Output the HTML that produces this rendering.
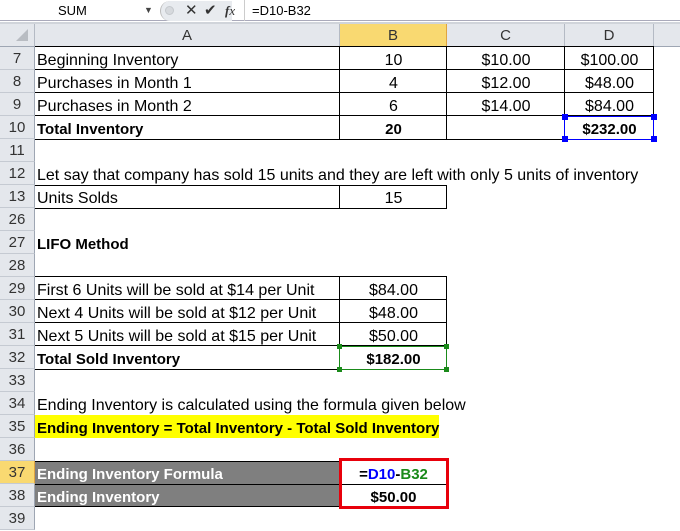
<!DOCTYPE html>
<html><head><meta charset="utf-8"><style>
*{margin:0;padding:0;box-sizing:border-box}
body{width:680px;height:529px;overflow:hidden;background:#fff;font-family:"Liberation Sans",sans-serif;position:relative}
.a{position:absolute}
.t{position:absolute;font-size:16px;line-height:25px;height:23px;white-space:nowrap;color:#000;margin-top:1px}
.c{text-align:center}
.b{font-weight:bold;font-size:15px}
.rh{position:absolute;left:0;width:35px;height:23px;background:#e4e7ec;border-right:1px solid #9ea6b3;border-bottom:1px solid #c5cad2;text-align:center;font-size:15px;line-height:24px;color:#333}
.ch{position:absolute;top:24px;height:23px;background:#e4e7ec;border-right:1px solid #b4bac4;border-bottom:1px solid #9ea6b3;text-align:center;font-size:15px;line-height:23px;color:#333}
.h{position:absolute;width:6px;height:6px}
</style></head><body>
<div class="a" style="left:0;top:0;width:680px;height:21px;background:#fff;border-bottom:1px solid #aab"></div>
<div class="a" style="left:0;top:22px;width:680px;height:2px;background:#d0d4da"></div>
<div class="a" style="left:58px;top:0;font-size:13px;line-height:21px">SUM</div>
<div class="a" style="left:144px;top:0;font-size:9px;line-height:21px;color:#444">▼</div>
<div class="a" style="left:160px;top:1px;width:72px;height:20px;background:#e8ebef;border-radius:10px 0 0 10px;border-left:1px solid #bbb"></div>
<div class="a" style="left:165px;top:6px;width:9px;height:9px;border-radius:50%;background:#d6d9dd;border:1px solid #c4c8cc"></div>
<div class="a" style="left:185px;top:0;font-size:15px;line-height:21px;color:#333">✕</div>
<div class="a" style="left:204px;top:0;font-size:15px;line-height:21px;color:#333">✔</div>
<div class="a" style="left:225px;top:0;font-size:13px;line-height:21px;font-style:italic;font-family:'Liberation Serif',serif;color:#333"><b>f</b>x</div>
<div class="a" style="left:244px;top:0;width:1px;height:21px;background:#ccc"></div>
<div class="a" style="left:252px;top:0;font-size:13px;line-height:21px">=D10-B32</div>
<div class="a" style="left:0;top:24px;width:35px;height:23px;background:#e4e7ec;border-right:1px solid #b4bac4;border-bottom:1px solid #9ea6b3"></div>
<div class="a" style="left:16px;top:29px;width:0;height:0;border-left:12px solid transparent;border-bottom:12px solid #b8bcc2"></div>
<div class="ch" style="left:35px;width:305px">A</div>
<div class="ch" style="left:340px;width:107px;background:#f9d971;border-bottom:1px solid #e0a540;border-right:1px solid #e0a540">B</div>
<div class="ch" style="left:447px;width:118px">C</div>
<div class="ch" style="left:565px;width:89px">D</div>
<div class="ch" style="left:654px;width:30px"></div>
<div class="rh" style="top:47px">7</div><div class="rh" style="top:70px">8</div><div class="rh" style="top:93px">9</div><div class="rh" style="top:116px">10</div><div class="rh" style="top:139px">11</div><div class="rh" style="top:162px">12</div><div class="rh" style="top:185px">13</div><div class="rh" style="top:208px">26</div><div class="rh" style="top:231px">27</div><div class="rh" style="top:254px">28</div><div class="rh" style="top:277px">29</div><div class="rh" style="top:300px">30</div><div class="rh" style="top:323px">31</div><div class="rh" style="top:346px">32</div><div class="rh" style="top:369px">33</div><div class="rh" style="top:392px">34</div><div class="rh" style="top:415px">35</div><div class="rh" style="top:438px">36</div><div class="rh" style="top:461px;background:#f9d971;border-right:1px solid #e0a540">37</div><div class="rh" style="top:484px">38</div><div class="rh" style="top:507px">39</div>
<div class="a" style="left:35px;top:46px;width:619px;height:94px;border:1px solid #000;border-left:none"></div>
<div class="a" style="left:35px;top:69px;width:619px;height:1px;background:#000"></div>
<div class="a" style="left:35px;top:92px;width:619px;height:1px;background:#000"></div>
<div class="a" style="left:35px;top:115px;width:619px;height:1px;background:#000"></div>
<div class="a" style="left:339px;top:46px;width:1px;height:94px;background:#000"></div>
<div class="a" style="left:446px;top:46px;width:1px;height:94px;background:#000"></div>
<div class="a" style="left:564px;top:46px;width:1px;height:94px;background:#000"></div>
<div class="t" style="left:37px;top:47px">Beginning Inventory</div>
<div class="t" style="left:37px;top:70px">Purchases in Month 1</div>
<div class="t" style="left:37px;top:93px">Purchases in Month 2</div>
<div class="t b" style="left:37px;top:116px">Total Inventory</div>
<div class="t c" style="left:340px;width:107px;top:47px">10</div>
<div class="t c" style="left:340px;width:107px;top:70px">4</div>
<div class="t c" style="left:340px;width:107px;top:93px">6</div>
<div class="t c b" style="left:340px;width:107px;top:116px">20</div>
<div class="t c" style="left:447px;width:118px;top:47px">$10.00</div>
<div class="t c" style="left:447px;width:118px;top:70px">$12.00</div>
<div class="t c" style="left:447px;width:118px;top:93px">$14.00</div>
<div class="t c" style="left:565px;width:89px;top:47px">$100.00</div>
<div class="t c" style="left:565px;width:89px;top:70px">$48.00</div>
<div class="t c" style="left:565px;width:89px;top:93px">$84.00</div>
<div class="t c b" style="left:565px;width:89px;top:116px">$232.00</div>
<div class="a" style="left:564px;top:116px;width:90px;height:24px;border:1px solid #0000ff"></div>
<div class="h" style="left:562px;top:114px;background:#00f"></div><div class="h" style="left:651px;top:114px;background:#00f"></div><div class="h" style="left:562px;top:136px;background:#00f"></div><div class="h" style="left:651px;top:136px;background:#00f"></div>
<div class="t" style="left:37px;top:162px">Let say that company has sold 15 units and they are left with only 5 units of inventory</div>
<div class="a" style="left:35px;top:185px;width:412px;height:24px;border:1px solid #000;border-left:none"></div>
<div class="a" style="left:339px;top:185px;width:1px;height:24px;background:#000"></div>
<div class="t" style="left:37px;top:185px">Units Solds</div>
<div class="t c" style="left:340px;width:107px;top:185px">15</div>
<div class="t b" style="left:37px;top:231px">LIFO Method</div>
<div class="a" style="left:35px;top:276px;width:412px;height:94px;border:1px solid #000;border-left:none"></div>
<div class="a" style="left:35px;top:299px;width:412px;height:1px;background:#000"></div>
<div class="a" style="left:35px;top:322px;width:412px;height:1px;background:#000"></div>
<div class="a" style="left:35px;top:345px;width:412px;height:1px;background:#000"></div>
<div class="a" style="left:339px;top:276px;width:1px;height:94px;background:#000"></div>
<div class="t" style="left:37px;top:277px">First 6 Units will be sold at $14 per Unit</div>
<div class="t" style="left:37px;top:300px">Next 4 Units will be sold at $12 per Unit</div>
<div class="t" style="left:37px;top:323px">Next 5 Units will be sold at $15 per Unit</div>
<div class="t b" style="left:37px;top:346px">Total Sold Inventory</div>
<div class="t c" style="left:340px;width:107px;top:277px">$84.00</div>
<div class="t c" style="left:340px;width:107px;top:300px">$48.00</div>
<div class="t c" style="left:340px;width:107px;top:323px">$50.00</div>
<div class="t c b" style="left:340px;width:107px;top:346px">$182.00</div>
<div class="a" style="left:339px;top:346px;width:108px;height:24px;border:1px solid #1a8a1a"></div>
<div class="h" style="left:337px;top:344px;background:#1a8a1a;width:5px;height:5px"></div><div class="h" style="left:444px;top:344px;background:#1a8a1a;width:5px;height:5px"></div><div class="h" style="left:337px;top:367px;background:#1a8a1a;width:5px;height:5px"></div><div class="h" style="left:444px;top:367px;background:#1a8a1a;width:5px;height:5px"></div>
<div class="t" style="left:37px;top:392px">Ending Inventory is calculated using the formula given below</div>
<div class="a" style="left:35px;top:415px;width:404px;height:23px;background:#ffff00"></div>
<div class="t b" style="left:37px;top:415px">Ending Inventory = Total Inventory - Total Sold Inventory</div>
<div class="a" style="left:35px;top:461px;width:305px;height:46px;background:#7f7f7f;border-top:1px solid #000;border-bottom:1px solid #000"></div>
<div class="a" style="left:35px;top:484px;width:305px;height:1px;background:#000"></div>
<div class="t b" style="left:37px;top:461px;color:#fff">Ending Inventory Formula</div>
<div class="t b" style="left:37px;top:484px;color:#fff">Ending Inventory</div>
<div class="a" style="left:340px;top:484px;width:106px;height:1px;background:#000"></div>
<div class="a" style="left:339px;top:458px;width:110px;height:51px;border:3px solid #e8000b"></div>
<div class="t c b" style="left:340px;width:107px;top:461px"><span style="color:#000">=</span><span style="color:#0000ff">D10</span>-<span style="color:#1a8a1a">B32</span></div>
<div class="t c b" style="left:340px;width:107px;top:484px">$50.00</div>
</body></html>
